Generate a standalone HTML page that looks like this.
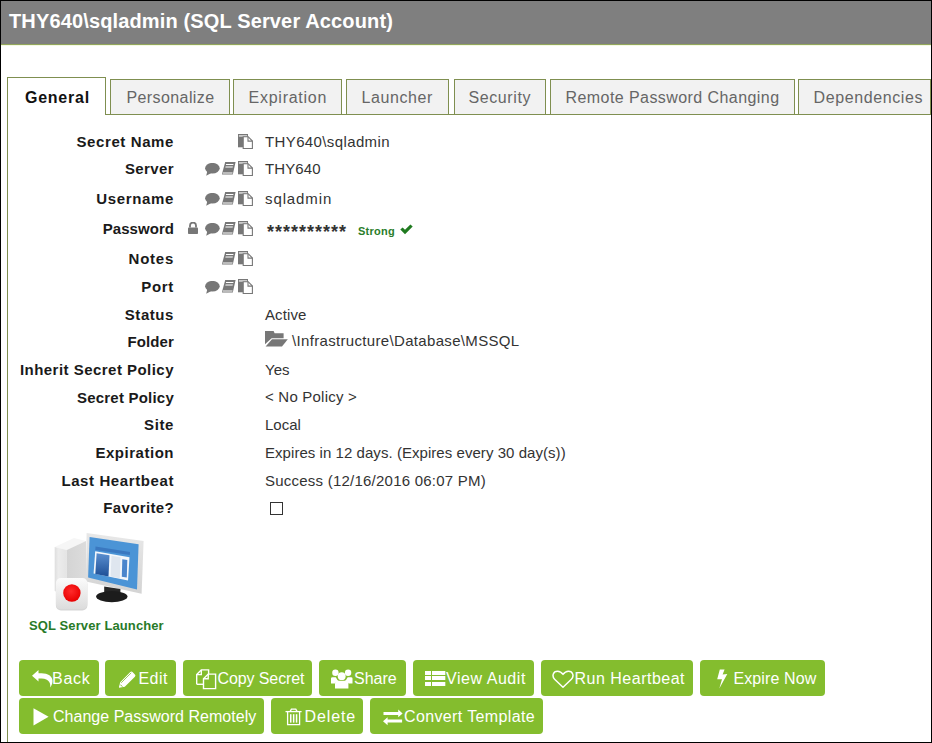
<!DOCTYPE html>
<html><head><meta charset="utf-8">
<style>
*{margin:0;padding:0;box-sizing:border-box}
html,body{width:932px;height:743px;overflow:hidden;background:#fff}
body{position:relative;font-family:"Liberation Sans",sans-serif;color:#333}
.frame{position:absolute;left:0;top:0;width:932px;height:743px;border:1px solid #000;z-index:10}
.hdr{position:absolute;left:1px;top:1px;width:930px;height:43px;background:#7f7f7f}
.hdrline{position:absolute;left:1px;top:44px;width:930px;height:1px;background:#93a65c}
.title{position:absolute;left:9px;top:9px;font-weight:bold;font-size:20px;line-height:24px;color:#fff;white-space:nowrap;letter-spacing:0.14px}
.tab{position:absolute;top:79px;height:36px;border:1px solid #7f8f50;background:#f2f2f2;color:#666;font-size:16px;line-height:22px;white-space:nowrap}
.tab span{position:absolute;top:7px}
.tab.act{top:77px;height:38px;background:#fff;border-bottom:none;color:#111;font-weight:bold}
.tab.act span{top:9px}
.pl{position:absolute;left:7px;top:114px;width:1px;height:628px;background:#7f8f50}
.pt{position:absolute;left:105px;top:114px;width:826px;height:1px;background:#7f8f50}
.lbl{position:absolute;font-weight:bold;font-size:15px;line-height:20px;color:#1a1a1a;white-space:nowrap}
.val{position:absolute;left:265px;font-size:15px;line-height:20px;color:#333;white-space:nowrap}
.fi{position:absolute;fill:#777}
.btn{position:absolute;height:36px;background:#84bd2e;border-radius:4px}
.bt{position:absolute;color:#fff;font-size:16px;line-height:20px;white-space:nowrap}
.bi{position:absolute;fill:#fff;stroke:none}
</style></head><body>
<svg width="0" height="0" style="position:absolute">
<defs>
<symbol id="i-comment" viewBox="0 0 15 13"><ellipse cx="7.4" cy="5.2" rx="7.3" ry="5.3"/><path d="M2.4 8 L1.2 12.8 L6.8 9.8 Z"/></symbol>
<symbol id="i-book" viewBox="0 0 14 13"><path d="M3.2 0 H13.6 L10.8 12.6 H0 L0.3 10.8 Z"/><path fill="#fff" d="M4.1 1.9 H11.5 L11.3 2.9 H3.9 Z M3.6 4.4 H10.9 L10.6 5.6 H3.3 Z M0.9 10.4 H10.6 L10.4 11.4 H0.7 Z"/></symbol>
<symbol id="i-copy" viewBox="0 0 15 15"><rect x="0" y="0" width="10" height="13.3"/><rect x="0.9" y="1.4" width="8.2" height="1.1" fill="#fff"/><path d="M5.2 2.7 H10.2 L14.4 7 V14.5 H5.2 Z" fill="#fff" stroke="#777" stroke-width="1.1"/><path d="M10 2.7 V7.1 H14.4" fill="none" stroke="#777" stroke-width="1.1"/></symbol>
<symbol id="i-lock" viewBox="0 0 10 12"><rect x="0" y="5.4" width="10" height="6.6" rx="0.8"/><path d="M2 5.6 V3.6 A3 3 0 0 1 8 3.6 V5.6" fill="none" stroke="#777" stroke-width="1.8"/></symbol>
</defs>
</svg>
<div class="frame" style="background:transparent"></div>
<div class="hdr"></div>
<div class="hdrline"></div><div style="position:absolute;left:1px;top:45px;width:930px;height:1px;background:#f4f9e4"></div>
<div class="title">THY640\sqladmin (SQL Server Account)</div>

<div class="tab" style="left:110px;width:120px"><span style="left:15.5px;letter-spacing:0.4px">Personalize</span></div>
<div class="tab" style="left:233px;width:109px"><span style="left:14.5px;letter-spacing:0.75px">Expiration</span></div>
<div class="tab" style="left:346px;width:103px"><span style="left:14.5px;letter-spacing:0.6px">Launcher</span></div>
<div class="tab" style="left:454px;width:92px"><span style="left:13.5px;letter-spacing:0.6px">Security</span></div>
<div class="tab" style="left:550px;width:245px"><span style="left:14.5px;letter-spacing:0.43px">Remote Password Changing</span></div>
<div class="tab" style="left:798px;width:133px"><span style="left:14.5px;letter-spacing:0.6px">Dependencies</span></div>
<div class="tab act" style="left:7px;width:99px"><span style="left:17px;letter-spacing:0.75px">General</span></div>
<div class="pl"></div>
<div class="pt"></div>

<!-- labels -->
<div class="lbl" style="top:132px;right:758px;letter-spacing:0.6px">Secret Name</div>
<div class="lbl" style="top:159px;right:758px;letter-spacing:0.4px">Server</div>
<div class="lbl" style="top:189px;right:758px;letter-spacing:0.65px">Username</div>
<div class="lbl" style="top:219px;right:758px;letter-spacing:0.05px">Password</div>
<div class="lbl" style="top:249px;right:758px;letter-spacing:0.75px">Notes</div>
<div class="lbl" style="top:277px;right:758px;letter-spacing:0.67px">Port</div>
<div class="lbl" style="top:305px;right:758px;letter-spacing:0.56px">Status</div>
<div class="lbl" style="top:332px;right:758px;letter-spacing:0.12px">Folder</div>
<div class="lbl" style="top:360px;right:758px;letter-spacing:0.47px">Inherit Secret Policy</div>
<div class="lbl" style="top:388px;right:758px;letter-spacing:0.22px">Secret Policy</div>
<div class="lbl" style="top:415px;right:758px;letter-spacing:0.6px">Site</div>
<div class="lbl" style="top:443px;right:758px;letter-spacing:0.52px">Expiration</div>
<div class="lbl" style="top:471px;right:758px;letter-spacing:0.6px">Last Heartbeat</div>
<div class="lbl" style="top:498px;right:758px;letter-spacing:0.36px">Favorite?</div>

<!-- field icons -->
<svg class="fi" style="left:238px;top:134px" width="15" height="15"><use href="#i-copy"/></svg>
<svg class="fi" style="left:205px;top:163px" width="15" height="13"><use href="#i-comment"/></svg>
<svg class="fi" style="left:222px;top:162px" width="14" height="13"><use href="#i-book"/></svg>
<svg class="fi" style="left:238px;top:161px" width="15" height="15"><use href="#i-copy"/></svg>
<svg class="fi" style="left:205px;top:193px" width="15" height="13"><use href="#i-comment"/></svg>
<svg class="fi" style="left:222px;top:192px" width="14" height="13"><use href="#i-book"/></svg>
<svg class="fi" style="left:238px;top:191px" width="15" height="15"><use href="#i-copy"/></svg>
<svg class="fi" style="left:188px;top:222px" width="10" height="12"><use href="#i-lock"/></svg>
<svg class="fi" style="left:205px;top:223px" width="15" height="13"><use href="#i-comment"/></svg>
<svg class="fi" style="left:222px;top:222px" width="14" height="13"><use href="#i-book"/></svg>
<svg class="fi" style="left:238px;top:221px" width="15" height="15"><use href="#i-copy"/></svg>
<svg class="fi" style="left:222px;top:252px" width="14" height="13"><use href="#i-book"/></svg>
<svg class="fi" style="left:238px;top:251px" width="15" height="15"><use href="#i-copy"/></svg>
<svg class="fi" style="left:205px;top:281px" width="15" height="13"><use href="#i-comment"/></svg>
<svg class="fi" style="left:222px;top:280px" width="14" height="13"><use href="#i-book"/></svg>
<svg class="fi" style="left:238px;top:279px" width="15" height="15"><use href="#i-copy"/></svg>
<svg class="fi" style="left:265px;top:331px" width="23" height="16" viewBox="0 0 23 16"><path d="M0 0 H8.6 L9.6 2.2 H18.6 V7.2 H6.6 L0 13.2 Z"/><path d="M7 8.2 H22.8 L17 15.6 H0.6 Z"/></svg>

<!-- values -->
<div class="val" style="top:132px;letter-spacing:0.38px">THY640\sqladmin</div>
<div class="val" style="top:159px;letter-spacing:0.1px">THY640</div>
<div class="val" style="top:189px;letter-spacing:0.9px">sqladmin</div>
<div class="val" style="top:222px;left:267px;font-size:18px;font-weight:bold;letter-spacing:1.0px">**********</div>
<div class="val" style="top:305px;letter-spacing:0.1px">Active</div>
<div class="val" style="top:331px;left:292px;letter-spacing:0.33px">\Infrastructure\Database\MSSQL</div>
<div class="val" style="top:360px">Yes</div>
<div class="val" style="top:387px;letter-spacing:0.21px">&lt; No Policy &gt;</div>
<div class="val" style="top:415px">Local</div>
<div class="val" style="top:443px;letter-spacing:0.05px">Expires in 12 days. (Expires every 30 day(s))</div>
<div class="val" style="top:471px;letter-spacing:0.23px">Success (12/16/2016 06:07 PM)</div>
<div style="position:absolute;left:358px;top:223px;font-weight:bold;font-size:11px;line-height:16px;color:#2a7d2a;letter-spacing:0.25px">Strong</div>
<svg style="position:absolute;left:400px;top:224px" width="13" height="11" viewBox="0 0 13 11"><path d="M0.3 5.6 L2.6 3.4 L5 5.8 L10.4 0.4 L12.7 2.6 L5 10.3 Z" fill="#1f7a1f"/></svg>
<div style="position:absolute;left:270px;top:502px;width:13px;height:13px;border:1px solid #333;background:#fff"></div>

<!-- launcher image -->
<svg style="position:absolute;left:40px;top:525px" width="120" height="90" viewBox="0 0 120 90">
 <defs>
  <linearGradient id="tl" x1="0" y1="0" x2="1" y2="0"><stop offset="0" stop-color="#dedede"/><stop offset="0.3" stop-color="#ececec"/><stop offset="1" stop-color="#e4e4e4"/></linearGradient>
  <linearGradient id="tr" x1="0" y1="0" x2="1" y2="0"><stop offset="0" stop-color="#d4d4d4"/><stop offset="1" stop-color="#dcdcdc"/></linearGradient>
  <linearGradient id="mf" x1="0" y1="0" x2="0" y2="1"><stop offset="0" stop-color="#e8e8e8"/><stop offset="1" stop-color="#d4d4d4"/></linearGradient>
  <linearGradient id="ph" x1="0" y1="0" x2="0" y2="1"><stop offset="0" stop-color="#5a8fd0"/><stop offset="1" stop-color="#1e4f96"/></linearGradient>
  <linearGradient id="bt" x1="0" y1="0" x2="0" y2="1"><stop offset="0" stop-color="#fbfbfb"/><stop offset="1" stop-color="#dcdcdc"/></linearGradient>
  <radialGradient id="rb" cx="0.45" cy="0.4" r="0.6"><stop offset="0" stop-color="#ff2a2a"/><stop offset="1" stop-color="#e80000"/></radialGradient>
 </defs>
 <path d="M14.7 22 L34 13 L46 16 L26.8 25 Z" fill="#f6f6f6"/>
 <path d="M14.7 22 L26.8 25 L26.8 70 L14.7 66 Z" fill="url(#tl)"/>
 <path d="M26.8 25 L46 16 L46 62 L26.8 70 Z" fill="url(#tr)"/>
 <path d="M46.6 8 L103.6 16.1 L101.6 68.7 L46 56.5 Z" fill="url(#mf)"/>
 <path d="M49.6 12.1 L98.6 19.2 L97 64.6 L48.1 52.5 Z" fill="#4b94d6"/>
 <path d="M55.5 21.5 L90 27 L89.8 30 L55.3 25 Z" fill="#3a78c0"/>
 <path d="M55.2 26.2 L89.5 32.3 L88 55.5 L53.6 48.5 Z" fill="#f3f7fb"/>
 <path d="M56.6 28.2 L69.5 30.3 L68.5 51.5 L55.3 49 Z" fill="url(#ph)"/>
 <path d="M71.5 30.7 L80.5 32.2 L79.8 53.2 L70.6 51.6 Z" fill="#dfe6ef"/>
 <path d="M82.3 34.2 L87.3 35 L86.8 52.6 L81.8 51.8 Z" fill="#4b86cc"/>
 <path d="M64.2 61.6 L80.4 64 L80.4 71.5 L64.2 70 Z" fill="#262626"/>
 <ellipse cx="71.8" cy="71.6" rx="15.7" ry="5.6" fill="#1c1c1c"/>
 <rect x="15.9" y="54" width="31.5" height="31.5" rx="5" fill="#d6d6d6"/>
 <rect x="15.9" y="53.1" width="31.5" height="31" rx="5" fill="url(#bt)"/>
 <circle cx="31.9" cy="68" r="8.7" fill="url(#rb)"/>
</svg>
<div style="position:absolute;left:29px;top:618px;font-weight:bold;font-size:13px;line-height:16px;color:#287a28;letter-spacing:0.11px;white-space:nowrap">SQL Server Launcher</div>

<!-- buttons row 1 -->
<div class="btn" style="left:19px;top:660px;width:80px"></div>
<div class="btn" style="left:105px;top:660px;width:71px"></div>
<div class="btn" style="left:183px;top:660px;width:129px"></div>
<div class="btn" style="left:319px;top:660px;width:87px"></div>
<div class="btn" style="left:413px;top:660px;width:121px"></div>
<div class="btn" style="left:541px;top:660px;width:152px"></div>
<div class="btn" style="left:700px;top:660px;width:125px"></div>
<!-- row 2 -->
<div class="btn" style="left:19px;top:698px;width:245px"></div>
<div class="btn" style="left:271px;top:698px;width:92px"></div>
<div class="btn" style="left:370px;top:698px;width:173px"></div>

<div class="bt" style="left:52px;top:669px;letter-spacing:0.75px">Back</div>
<div class="bt" style="left:138.5px;top:669px;letter-spacing:0.45px">Edit</div>
<div class="bt" style="left:217.5px;top:669px;letter-spacing:-0.1px">Copy Secret</div>
<div class="bt" style="left:354px;top:669px;letter-spacing:0px">Share</div>
<div class="bt" style="left:446px;top:669px;letter-spacing:0.55px">View Audit</div>
<div class="bt" style="left:574.5px;top:669px;letter-spacing:0.5px">Run Heartbeat</div>
<div class="bt" style="left:733.5px;top:669px;letter-spacing:0.1px">Expire Now</div>
<div class="bt" style="left:53px;top:707px;letter-spacing:0.02px">Change Password Remotely</div>
<div class="bt" style="left:304.5px;top:707px;letter-spacing:0.9px">Delete</div>
<div class="bt" style="left:404px;top:707px;letter-spacing:0.37px">Convert Template</div>

<!-- button icons -->
<svg class="bi" style="left:32px;top:670px" width="21" height="18" viewBox="0 0 21 18"><path d="M0 5.8 L6.5 0 V3.2 H9.5 C16 3.2 20.5 6 20.5 11 C20.5 13.8 19.3 16 18.2 17.6 C18.8 14 17.5 8.6 9.5 8.6 H6.5 V11.6 Z"/></svg>
<svg class="bi" style="left:118px;top:671px" width="19" height="17" viewBox="0 0 19 17"><path d="M1 15.8 L2.2 11.2 L12.3 1.1 Q13.4 0 14.5 1.1 L16.9 3.5 Q18 4.6 16.9 5.7 L6.8 15.8 L1 16.8 Z"/><path d="M3.2 11.8 L13.2 1.8" stroke="#84bd2e" stroke-width="0.8"/><path d="M2.3 13.6 L4.4 15.7" stroke="#84bd2e" stroke-width="1"/></svg>
<svg class="bi" style="left:196px;top:669px" width="21" height="21" viewBox="0 0 21 21"><g fill="none" stroke="#fff" stroke-width="1.4"><path d="M0.7 15.3 V5.6 L5.3 0.9 H12.6 V5"/><path d="M0.7 15.3 H7.2"/><path d="M5.3 0.9 V5.6 H0.7"/><path d="M7.5 19.6 V9.8 L12.2 5.1 H19.6 V19.6 Z"/><path d="M12.2 5.1 V9.8 H7.5"/></g></svg>
<svg class="bi" style="left:331px;top:669px" width="22" height="20" viewBox="0 0 22 20"><circle cx="4.4" cy="3.8" r="3.2"/><circle cx="17.1" cy="3.8" r="3.2"/><circle cx="10.7" cy="7.2" r="3.9"/><path d="M0 9.5 Q0 8.2 1.5 8.2 H4.8 Q6 10.8 8 12.2 Q4.5 12.5 4 14.5 H0 Z"/><path d="M21.5 9.5 Q21.5 8.2 20 8.2 H16.7 Q15.5 10.8 13.5 12.2 Q17 12.5 17.5 14.5 H21.5 Z"/><path d="M4 19.6 V15 Q4 11.8 7 11.8 H14.4 Q17.4 11.8 17.4 15 V19.6 Z"/></svg>
<svg class="bi" style="left:425px;top:671px" width="21" height="16" viewBox="0 0 21 16"><rect x="0" y="0" width="6" height="4"/><rect x="7" y="0" width="13.3" height="4"/><rect x="0" y="5" width="6" height="4"/><rect x="7" y="5" width="13.3" height="4"/><rect x="0" y="11" width="6" height="4"/><rect x="7" y="11" width="13.3" height="4"/></svg>
<svg class="bi" style="left:552px;top:670px" width="22" height="19" viewBox="0 0 22 19"><path d="M11 17.3 L2.6 9.2 C-0.2 6.4 0.8 1.2 5.6 1.2 C8.2 1.2 10 3 11 4.4 C12 3 13.8 1.2 16.4 1.2 C21.2 1.2 22.2 6.4 19.4 9.2 Z" fill="none" stroke="#fff" stroke-width="1.5" stroke-linejoin="round"/></svg>
<svg class="bi" style="left:717px;top:669px" width="11" height="20" viewBox="0 0 11 20"><path d="M2.8 0.6 H7.6 L5.6 5.4 L10.3 5.0 L2.3 19.6 L5 10.2 H0.2 Z"/></svg>
<svg class="bi" style="left:33px;top:708px" width="16" height="18" viewBox="0 0 16 18"><path d="M0.5 0.2 L15.6 8.7 L0.5 17.4 Z"/></svg>
<svg class="bi" style="left:285px;top:708px" width="18" height="18" viewBox="0 0 18 18"><g fill="none" stroke="#fff" stroke-width="1.3"><path d="M0.5 3.6 H16.6"/><path d="M5.2 3.4 L6.4 1.2 H10.8 L12 3.4"/><path d="M2.6 3.8 V16.6 H14.6 V3.8"/></g><rect x="5" y="6.2" width="1.5" height="8.4"/><rect x="7.9" y="6.2" width="1.5" height="8.4"/><rect x="10.8" y="6.2" width="1.5" height="8.4"/></svg>
<svg class="bi" style="left:382px;top:709px" width="22" height="17" viewBox="0 0 22 17"><path d="M1.5 3 H16.2 V0.4 L20.6 4.4 L16.2 8.3 V5.9 H1.5 Z"/><path d="M20.1 10.5 H5.6 V8.3 L1 12.2 L5.6 16.2 V13.5 H20.1 Z"/></svg>

<div class="frame" style="background:transparent;z-index:20"></div>
</body></html>
